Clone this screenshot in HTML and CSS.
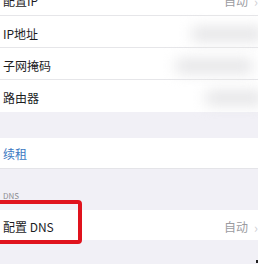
FILE: index.html
```html
<!DOCTYPE html>
<html lang="zh">
<head>
<meta charset="utf-8">
<link rel="stylesheet" href="styles.css">
</head>
<body>
<div class="page">
  <div class="group">
    <div class="row sep">
      <span class="label">配置IP</span>
      <span class="value">自动<span class="chev">›</span></span>
    </div>
    <div class="row sep">
      <span class="label">IP地址</span>
      <span class="blur b1"></span>
    </div>
    <div class="row sep">
      <span class="label">子网掩码</span>
      <span class="blur b2"></span>
    </div>
    <div class="row">
      <span class="label">路由器</span>
      <span class="blur b3"></span>
    </div>
  </div>
  <div class="gap"></div>
  <div class="group">
    <div class="row renew">
      <span class="label link">续租</span>
    </div>
  </div>
  <div class="header">DNS</div>
  <div class="group dns">
    <div class="row dnsrow">
      <span class="label">配置 DNS</span>
      <span class="value">自动<span class="chev">›</span></span>
    </div>
    <div class="highlight"></div>
  </div>
  <div class="dot"></div>
</div>
</body>
</html>
```

FILE: styles.css
```css
html, body {
  margin: 0;
  padding: 0;
}
body {
  width: 258px;
  height: 264px;
  overflow: hidden;
  background: #f1f0f6;
  font-family: "Noto Sans CJK SC", "Noto Sans", sans-serif;
  color: #1d1d1f;
}
.page {
  position: relative;
  margin-top: -17px;
  height: 280px;
}
.group {
  background: #ffffff;
}
.row {
  height: 32px;
  box-sizing: border-box;
  display: flex;
  align-items: center;
  justify-content: space-between;
  padding-left: 3px;
  font-size: 12px;
  line-height: 1;
}
.row:first-child {
  height: 33px;
}
.sep {
  border-bottom: 1px solid #e6e6e9;
}
.label {
  white-space: nowrap;
  padding-top: 4px;
}
.value {
  color: #9b9b9f;
  display: flex;
  align-items: center;
  gap: 6px;
  margin-right: 0;
  padding-top: 4px;
}
.chev {
  color: #d0d0d4;
  font-size: 13px;
}
.blur {
  height: 14px;
  background: #e4e4e6;
  filter: blur(7px);
  margin-top: 4px;
}
.b1 { width: 70px; margin-right: -4px; }
.b2 { width: 76px; margin-right: 6px; }
.b3 { width: 56px; margin-right: -4px; }
.gap {
  height: 26px;
}
.renew {
  height: 31px;
  border-bottom: 1px solid #e4e4e8;
}
.group .renew {
  height: 31px;
}
.renew .label {
  padding-top: 1px;
}
.link {
  color: #3a78c2;
}
.header {
  height: 41px;
  box-sizing: border-box;
  padding-left: 3px;
  display: flex;
  align-items: flex-end;
  padding-bottom: 10px;
  font-size: 8px;
  color: #8e8e93;
  line-height: 1;
}
.dns {
  position: relative;
}
.group .dnsrow {
  height: 30px;
}
.highlight {
  position: absolute;
  left: -4px;
  top: -10px;
  width: 86px;
  height: 44px;
  box-sizing: border-box;
  border: 4px solid #e0131d;
  border-radius: 4px;
}
.dot {
  position: absolute;
  right: 0;
  top: 277px;
  width: 2px;
  height: 3px;
  background: #222;
}
```
